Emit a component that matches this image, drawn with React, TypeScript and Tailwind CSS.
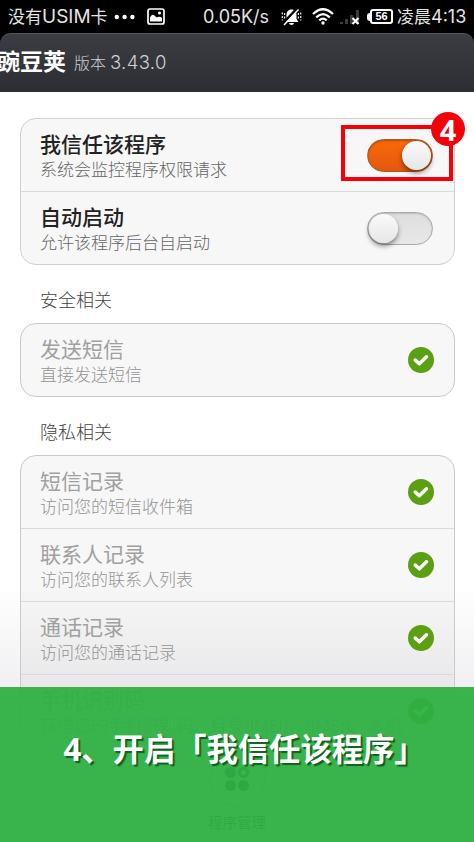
import type { ReactNode } from "react";

const sections = [
  {
    title: "安全相关",
    items: [{ name: "发送短信", description: "直接发送短信" }],
  },
  {
    title: "隐私相关",
    items: [
      { name: "短信记录", description: "访问您的短信收件箱" },
      { name: "联系人记录", description: "访问您的联系人列表" },
      { name: "通话记录", description: "访问您的通话记录" },
      { name: "手机识别码", description: "获得您的手机识别码，目录(IMEI)、(IMSI)、本机" },
    ],
  },
];

function StatusBar() {
  return (
    <div className="flex h-[33px] items-center bg-black pl-2 pr-2 text-[17px] leading-none text-[#e4e4e4]">
      <span className="w-[106px] shrink-0 whitespace-nowrap">
        没有<span className="font-[Inter] text-[19px]">USIM</span>卡
      </span>
      <svg className="shrink-0" width="21" height="6" viewBox="0 0 21 6" fill="#fff">
        <circle cx="2.8" cy="3" r="2.2" />
        <circle cx="10.6" cy="3" r="2.2" />
        <circle cx="18.4" cy="3" r="2.2" />
      </svg>
      <svg className="ml-3 shrink-0" width="18" height="17" viewBox="0 0 18 17">
        <rect x="1" y="1" width="16" height="15" rx="2" fill="none" stroke="#fff" strokeWidth="1.7" />
        <path d="M3 13.5V9.5Q5 5 8 8Q9.500 10 11 9Q13 8 15 10V13.500Z" fill="#fff" />
        <circle cx="12.500" cy="5" r="1.500" fill="#fff" />
      </svg>
      <span className="ml-[38px] w-[68px] shrink-0 whitespace-nowrap font-[Inter] text-[18px]">0.05K/s</span>
      <svg className="ml-2.5 shrink-0" width="21" height="18" viewBox="0 0 21 18">
        <path d="M10.500 1.500C14 1.500 15.500 4 15.500 7V11L17.500 14H3.500L5.500 11V7C5.500 4 7 1.500 10.500 1.500Z" fill="#fff" />
        <path d="M8 15H13Q12.500 17 10.500 17Q8.500 17 8 15Z" fill="#fff" />
        <path d="M1.300 4.500V6.500M1.300 8V10M1.300 11.500V12.500M3.600 5V7M3.600 8.500V10.500M19.700 4.500V6.500M19.700 8V10M19.700 11.500V12.500M17.400 5V7M17.400 8.500V10.500" stroke="#eee" strokeWidth="1.200" />
        <path d="M2 15.500L16 0.500" stroke="#000" strokeWidth="2.600" />
        <path d="M3 17L17.500 1.500" stroke="#fff" strokeWidth="1.600" />
      </svg>
      <svg className="ml-2.5 shrink-0" width="22" height="17" viewBox="0 0 22 17" fill="none" stroke="#fff" strokeWidth="2.300">
        <path d="M1 6Q11 -3.500 21 6M4.200 9.300Q11 3 17.800 9.300M7.300 12.300Q11 9 14.700 12.300" />
        <circle cx="11" cy="15" r="1.700" fill="#fff" stroke="none" />
      </svg>
      <svg className="ml-1.5 shrink-0" width="20" height="16" viewBox="0 0 20 16">
        <path d="M0 13H3V15H0ZM5 10H8V15H5ZM10 6H13V15H10ZM16 1H19V15H16Z" fill="#3c3c3c" />
        <path d="M12.500 9L18.500 15M18.500 9L12.500 15" stroke="#fff" strokeWidth="2.200" />
      </svg>
      <div className="ml-[7px] h-2 w-[3px] shrink-0 rounded-l bg-white" />
      <div className="flex h-[15px] w-[23px] shrink-0 items-center justify-center rounded-[3px] border-2 border-white font-['Liberation_Sans'] text-[11px] font-bold text-white">
        56
      </div>
      <span className="ml-1 whitespace-nowrap">
        凌晨<span className="font-[Inter] text-[18px]">4:13</span>
      </span>
    </div>
  );
}

function Header() {
  return (
    <div className="bg-black">
      <header className="flex h-[59px] items-center rounded-t-[11px] border-t border-[#55575c] bg-linear-to-b from-[#3b3d43] to-[#2c2e33]">
        <h1 className="-ml-[3px] text-[23px] font-bold text-white">豌豆荚</h1>
        <span className="ml-2 text-[16px] font-light text-[#cfd0d3]">
          版本 <span className="font-[Inter] text-[18.500px] tracking-[0.02em]">3.43.0</span>
        </span>
      </header>
    </div>
  );
}

function Toggle({ on }: { on?: boolean }) {
  return (
    <div
      className={
        on
          ? "mr-px flex h-[33px] w-[66px] justify-end rounded-full border border-[#a9592b] bg-linear-to-b from-[#fa6a08] to-[#e4570f] p-px shadow-[inset_0_1px_2px_rgba(110,40,0,0.5)]"
          : "mr-px flex h-[33px] w-[66px] rounded-full border border-[#aaa] bg-linear-to-b from-[#dedede] to-[#e8e8e8] p-px shadow-[inset_0_1px_2px_rgba(0,0,0,0.15)]"
      }
    >
      <div className="size-[29px] rounded-full bg-linear-to-b from-[#fafafa] to-[#e6e6e6] shadow-[0_3px_5px_rgba(0,0,0,0.45)]" />
    </div>
  );
}

function CheckBadge() {
  return (
    <svg width="26" height="26" viewBox="0 0 26 26">
      <circle cx="13" cy="13" r="13" fill="#5b9f12" />
      <path d="M7.200 13L11.300 16.800L18.500 9.800" fill="none" stroke="#fff" strokeWidth="3.500" strokeLinecap="round" strokeLinejoin="round" />
    </svg>
  );
}

function Row({ name, description, muted, children }: { name: string; description: string; muted?: boolean; children: ReactNode }) {
  return (
    <div className="flex h-[73px] items-center justify-between border-b border-[#d9dadd] pl-[19px] pr-5 last:h-[72px] last:border-b-0">
      <div className={muted ? "pt-[5px] text-[#a0a0a0]" : "pt-[5px] text-[#222]"}>
        <p className={muted ? "text-[21px] leading-[26px]" : "text-[21px] font-medium leading-[26px]"}>{name}</p>
        <p className={muted ? "whitespace-nowrap text-[17px] font-light leading-[25px] text-[#949494]" : "text-[17px] font-light leading-[25px] text-[#666]"}>
          {description}
        </p>
      </div>
      {children}
    </div>
  );
}

export default function App() {
  return (
    <div className="relative flex h-[842px] w-[474px] flex-col overflow-hidden bg-white font-[Roboto,'Noto_Sans_CJK_SC',sans-serif]">
      <StatusBar />
      <Header />
      <main className="h-[648px] shrink-0 overflow-hidden bg-linear-to-b from-white from-76% to-[#e9e9ec] px-5 pt-[26px]">
        <div className="relative">
          <div className="w-[435px] rounded-2xl border border-[#cfcfcf] bg-[#f7f7f7]">
            <Row name="我信任该程序" description="系统会监控程序权限请求">
              <Toggle on />
            </Row>
            <Row name="自动启动" description="允许该程序后台自启动">
              <Toggle />
            </Row>
          </div>
          {/* step marker over the first switch */}
          <div className="absolute left-[321px] top-[7px] h-[56px] w-[112px] border-4 border-[#f5000a]" />
          <div className="absolute left-[411px] top-[-6px] flex size-[34px] items-center justify-center rounded-full bg-[#f5000a] font-['Open_Sans'] text-[29px] font-bold leading-none text-white">
            4
          </div>
        </div>
        {sections.map((section) => (
          <section key={section.title}>
            <h2 className="flex h-[58px] items-center pl-5 pt-[13px] text-[18px] font-light text-[#444]">{section.title}</h2>
            <div className="w-[435px] rounded-2xl border border-[#cacaca] bg-black/[0.032]">
              {section.items.map((item) => (
                <Row key={item.name} name={item.name} description={item.description} muted>
                  <CheckBadge />
                </Row>
              ))}
            </div>
          </section>
        ))}
      </main>
      <footer className="flex grow flex-col items-center bg-[#eee] pt-[10px]">
        <div className="flex size-[57px] items-center justify-center rounded-full border-2 border-[#ccc]">
          <div className="grid grid-cols-2 gap-[2px]">
            <i className="size-[11px] rounded-full bg-[#333]" />
            <i className="size-[11px] rounded-full border-[3px] border-[#333]" />
            <i className="size-[11px] rounded-full bg-[#333]" />
            <i className="size-[11px] rounded-full bg-[#333]" />
          </div>
        </div>
        <span className="mt-[7px] text-[14.500px] leading-5 text-[#444]">程序管理</span>
      </footer>
      <div className="absolute inset-x-0 bottom-0 flex h-[155px] justify-center bg-[#2eb042]/94 pt-[39px]">
        <p className="whitespace-nowrap pl-[15px] font-['Open_Sans','Noto_Sans_CJK_SC',sans-serif] text-[31.300px] font-bold leading-[46px] text-white [text-shadow:2px_2px_1px_rgba(0,70,15,0.75)]">
          4、开启「我信任该程序」
        </p>
      </div>
    </div>
  );
}
